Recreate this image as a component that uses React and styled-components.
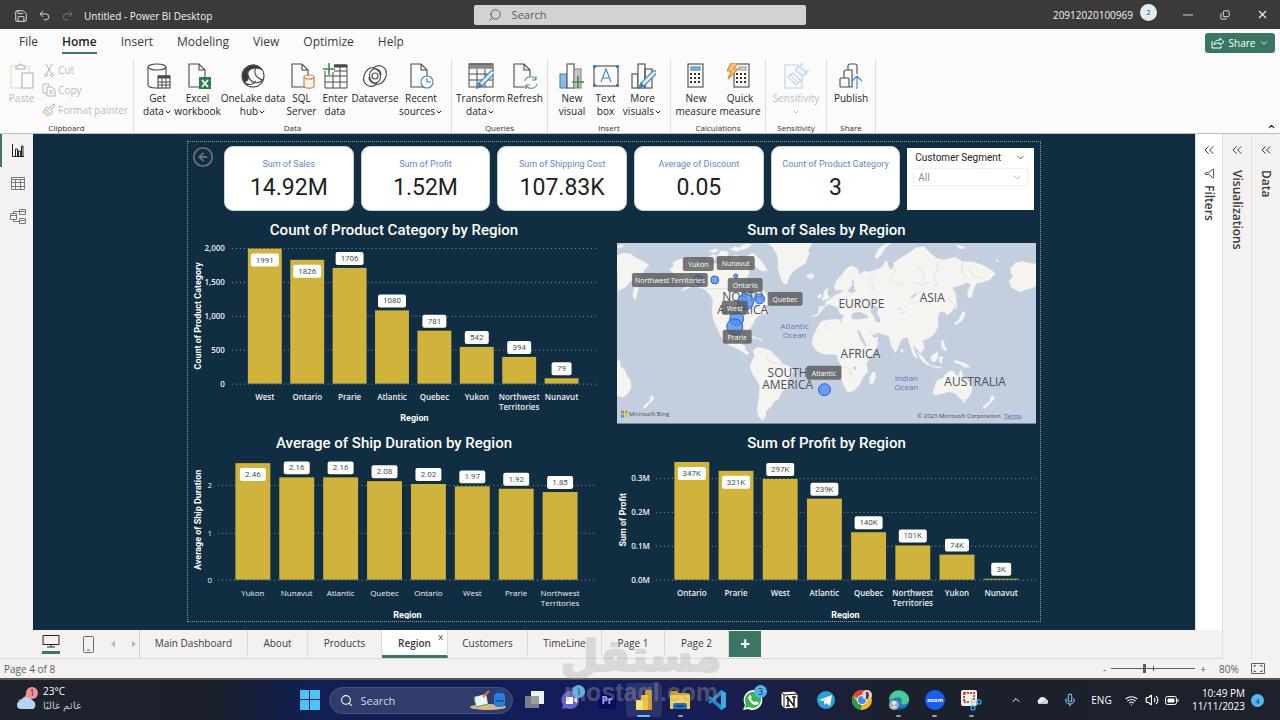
import React from 'react'
import styled, { createGlobalStyle, css } from 'styled-components'
import {
  ChevronDown,
  ChevronUp,
  ChevronsLeft,
  Filter,
  Search,
  X,
  Copy as RestoreIcon,
  Undo2,
  Redo2,
  Save,
  Wifi,
  Volume2,
  Mic,
  CircleArrowLeft,
} from 'lucide-react'

const ui = `'Open Sans', 'Noto Sans', sans-serif`
const din = `Roboto, 'Open Sans', sans-serif`

const GlobalStyle = createGlobalStyle`
  *, *::before, *::after {
    box-sizing: border-box;
  }

  body {
    margin: 0;
    background: #f3f2f1;
    color: #252423;
    font-family: ${ui};
    font-size: 10px;
  }

  button, input, select {
    margin: 0;
    padding: 0;
    border: 0;
    background: none;
    color: inherit;
    font: inherit;
  }

  svg {
    display: block;
    flex: none;
  }
`

const Window = styled.div`
  display: flex;
  flex-direction: column;
  min-height: 100vh;
  position: relative;
  overflow: hidden;
`

/* ---------- title bar ---------- */

const TitleBar = styled.header`
  display: grid;
  grid-template-columns: 1fr 26% 1fr;
  align-items: center;
  height: 29px;
  background: #3b3a39;
  color: #f3f2f1;
`

const TitleLeft = styled.div`
  display: flex;
  align-items: center;
  gap: 10px;
  padding: 2px 0 0 14px;
  white-space: nowrap;

  button:nth-child(3) {
    opacity: 0.4;
  }
`

const SearchBox = styled.label`
  display: flex;
  align-items: center;
  gap: 10px;
  height: 20px;
  padding: 0 14px;
  border-radius: 2px;
  background: #d2d3d0;
  color: #3f5550;

  svg {
    transform: scaleX(-1);
  }

  input {
    flex: 1;
    min-width: 0;
    font-size: 11px;
    outline: none;
  }

  input::placeholder {
    color: #4d6460;
    opacity: 1;
  }
`

const TitleRight = styled.div`
  display: flex;
  align-items: center;
  justify-content: flex-end;
  padding-right: 11px;
`

const Avatar = styled.span`
  width: 17px;
  height: 17px;
  margin: 0 24px 4px 7px;
  border-radius: 50%;
  background: #deecf4;
  color: #27505e;
  font-size: 7px;
  line-height: 17px;
  text-align: center;
`

const WindowButton = styled.button`
  display: flex;
  justify-content: center;
  width: 14px;
  margin-left: ${(p) => (p.$first ? 0 : 23)}px;
`

/* ---------- ribbon ---------- */

const Ribbon = styled.section`
  background: #fbfbfb;
  border-bottom: 1px solid #b8c0c6;
`

const RibbonTabs = styled.nav`
  display: flex;
  align-items: center;
  height: 28px;
  padding: 0 5px 0 7px;
`

const RibbonTab = styled.button`
  padding: 0 12px;
  font-size: 12px;
  line-height: 17px;
  color: #3b3a39;

  span {
    display: block;
    padding: 1px 0 2px;
    border-bottom: 2px solid transparent;
  }

  ${(p) =>
    p.$active &&
    css`
      color: #201f1e;
      font-weight: 600;

      span {
        border-color: #3f7565;
      }
    `}
`

const ShareButton = styled.button`
  display: flex;
  align-items: center;
  justify-content: center;
  gap: 4px;
  width: 70px;
  height: 20px;
  margin-left: auto;
  border-radius: 3px;
  background: #3a7663;
  color: white;
  font-size: 10px;
`

const RibbonBody = styled.div`
  display: flex;
  align-items: stretch;
  padding: 2px 4px 0 0;
`

const Group = styled.div`
  display: flex;
  flex-direction: column;
  width: ${(p) => p.$width}px;
  height: 74px;
  border-right: 1px solid #dfdedd;
`

const GroupItems = styled.div`
  display: flex;
  justify-content: center;
  flex: 1;
  padding-top: 4px;
`

const GroupName = styled.div`
  font-size: 8px;
  line-height: 11px;
  text-align: center;
  color: #323130;
`

const ToolButton = styled.button`
  display: flex;
  flex-direction: column;
  align-items: center;
  width: ${(p) => p.$width}px;
  font-size: 10px;
  line-height: 13px;
  white-space: nowrap;
  color: ${(p) => (p.disabled ? '#bdbbb9' : '#252423')};

  .icon {
    height: 29px;
  }

  .line {
    display: flex;
    align-items: center;
    min-height: 13px;
  }
`

const ClipboardList = styled.div`
  display: flex;
  flex-direction: column;
  margin: -3px 0 0 4px;
`

const ClipboardButton = styled.button`
  display: flex;
  align-items: center;
  gap: 2px;
  height: 20px;
  color: #bdbbb9;
  font-size: 10px;
  line-height: 13px;
  white-space: nowrap;
`

const CollapseButton = styled.button`
  align-self: flex-end;
  margin: 0 0 2px auto;
`

/* ---------- work area ---------- */

const WorkArea = styled.div`
  display: flex;
  flex: 1;
`

const Center = styled.div`
  display: flex;
  flex-direction: column;
  flex: 1;
  min-width: 0;
`

const Stage = styled.div`
  display: flex;
  flex: 1;
`

const Rail = styled.nav`
  display: flex;
  flex-direction: column;
  width: 33px;
  background: #f3f2f1;
`

const RailButton = styled.button`
  display: flex;
  align-items: center;
  justify-content: center;
  height: 33px;
  border-left: 2px solid ${(p) => (p.$active ? '#3a7663' : 'transparent')};
`

const Canvas = styled.main`
  display: flex;
  flex: 1;
  min-width: 0;
  padding: 7px 154px 8px;
  background: #112d42;
`

const Report = styled.div`
  display: flex;
  flex-direction: column;
  flex: 1;
  min-width: 0;
  padding: 4px 4px 0 1px;
  border: 1px dotted #8fa0ab;
`

const CardRow = styled.div`
  display: grid;
  grid-template-columns: 28px repeat(5, minmax(0, 130fr)) minmax(0, 127fr);
  gap: 7px;
  padding-right: 2px;
`

const BackButton = styled.button`
  justify-self: center;
  align-self: start;
  color: #6b6f70;
`

const Card = styled.article`
  display: flex;
  flex-direction: column;
  align-items: center;
  height: 65px;
  padding-top: 12px;
  border: 1px solid #c9d0d6;
  border-radius: 9px;
  background: white;
  font-family: ${din};

  h3 {
    margin: 0;
    color: #6684cf;
    font-size: 9px;
    font-weight: 400;
    line-height: 11px;
    white-space: nowrap;
  }

  p {
    margin: 4px 0 0;
    color: #201f1e;
    font-size: 23px;
    line-height: 28px;
  }
`

const Slicer = styled.label`
  display: block;
  height: 62px;
  margin-top: 2px;
  padding: 1px 8px;
  background: white;
  font-family: ${din};
  font-size: 10px;

  .head {
    display: flex;
    align-items: center;
    justify-content: space-between;
    height: 16px;
    white-space: nowrap;
  }

  .box {
    display: flex;
    align-items: center;
    height: 18px;
    margin: 3px -2px 0;
    padding: 0 4px;
    border: 1px solid #f1f0ee;
    color: #8f8e8b;
  }

  select {
    flex: 1;
    appearance: none;
    outline: none;
  }
`

const Visuals = styled.div`
  display: grid;
  grid-template-columns: minmax(0, 411fr) minmax(0, 420fr);
  column-gap: 18px;
  align-items: start;
  margin-top: 9px;
`

const Visual = styled.section`
  h2 {
    margin: 0;
    padding-bottom: 2px;
    color: white;
    font: 500 15px/21px ${din};
    text-align: center;
    white-space: nowrap;
  }

  & > svg {
    width: 100%;
    height: auto;
  }
`

const ChartSvg = styled.svg`
  .grid {
    stroke: #8696a1;
    stroke-width: 1;
    stroke-dasharray: 1 3;
  }

  .tick,
  .category {
    fill: #eef1f3;
    font-family: ${ui};
    font-size: 8px;
  }

  .strong {
    font-weight: 600;
  }

  .category {
    text-anchor: middle;
  }

  .tick {
    text-anchor: end;
  }

  .title {
    fill: white;
    font: 700 9px ${din};
    text-anchor: middle;
  }

  .value {
    fill: #4a4f55;
    font: 8px ${din};
    text-anchor: middle;
  }
`

const MapSvg = styled.svg`
  font-family: ${ui};

  .land {
    fill: #f6f4f1;
    stroke: #f6f4f1;
    stroke-width: 2;
    stroke-linejoin: round;
  }

  .water {
    fill: #c3cfdf;
    stroke: none;
  }

  .river {
    fill: none;
    stroke: #ccd6e2;
    stroke-width: 2;
  }

  .continent {
    fill: #4c4f57;
    font-size: 12px;
    text-anchor: middle;
  }

  .ocean {
    fill: #6474bd;
    font-size: 8px;
    text-anchor: middle;
  }

  .bubble {
    fill: #4f8df0;
    fill-opacity: 0.8;
    stroke: #2f5fbd;
  }

  .tag {
    fill: #575757;
    fill-opacity: 0.8;
  }

  .tagText {
    fill: white;
    font-size: 7px;
    text-anchor: middle;
  }

  .note {
    fill: #4b4b4b;
    font-size: 6px;
  }
`

const SidePane = styled.aside`
  display: flex;
  flex-direction: column;
  align-items: center;
  gap: ${(p) => (p.$light ? 10 : 12)}px;
  width: ${(p) => (p.$light ? 27 : 29)}px;
  padding-top: 8px;
  border-left: 1px solid #e1dfdd;
  background: ${(p) => (p.$light ? '#ffffff' : '#f3f2f1')};
  color: #3b3a39;
  font-size: 12px;
  font-weight: 600;

  h2 {
    margin: 0;
    font: inherit;
    line-height: 16px;
    writing-mode: vertical-rl;
  }

  .funnel {
    transform: rotate(90deg);
  }
`

const PaneTitle = styled.div`
  display: flex;
  flex-direction: column;
  align-items: center;
  gap: 6px;
`

const PageBar = styled.nav`
  display: flex;
  height: 29px;
  padding-left: 33px;
  border-bottom: 1px solid #dcdad8;
  background: #f3f2f1;
`

const ViewButtons = styled.div`
  display: flex;
  align-items: center;
  gap: 17px;
  width: 107px;
  padding-left: 9px;
  border-right: 1px solid #d2d0ce;

  svg:nth-child(2) {
    margin-left: 6px;
  }
`

const PagerButton = styled.button`
  width: 4px;
`

const PageTab = styled.button`
  position: relative;
  width: ${(p) => p.$width}px;
  border-right: 1px solid #dcdad8;
  border-bottom: 3px solid ${(p) => (p.$active ? '#3a7663' : 'transparent')};
  background: ${(p) => (p.$active ? '#ffffff' : 'transparent')};
  color: #3b3a39;
  font-size: 10px;
  font-weight: ${(p) => (p.$active ? 600 : 400)};
  white-space: nowrap;
`

const CloseMark = styled.span`
  position: absolute;
  top: 1px;
  right: 4px;
  font-size: 9px;
  font-weight: 400;
  line-height: 12px;
`

const AddPage = styled.button`
  width: 32px;
  margin: 1px 0;
  background: #3a7663;
  color: white;
  font-size: 17px;
  font-weight: 700;
  line-height: 20px;
`

const StatusBar = styled.footer`
  display: flex;
  align-items: center;
  height: 21px;
  padding: 0 15px 0 4px;
  border-bottom: 2px solid #55565a;
  background: #f3f2f1;
  color: #605e5c;
`

const Zoom = styled.div`
  display: flex;
  align-items: center;
  gap: 5px;
  margin-left: auto;

  output {
    width: 29px;
    padding-left: 8px;
    margin-right: 6px;
  }

  input {
    width: 84px;
    height: 12px;
    appearance: none;
    background: linear-gradient(#605e5c, #605e5c) center / 100% 1px no-repeat,
      linear-gradient(#605e5c, #605e5c) 50% 50% / 1px 5px no-repeat;
  }

  input::-webkit-slider-thumb {
    appearance: none;
    width: 3px;
    height: 9px;
    background: #605e5c;
  }
`

/* ---------- taskbar ---------- */

const Taskbar = styled.footer`
  display: grid;
  grid-template-columns: 1fr auto 1fr;
  align-items: center;
  height: 40px;
  background: linear-gradient(90deg, #1e222c 0, #1b202d 17%, #111f52 24%, #141c5c 50%, #191f4c 58%, #1b202d 70%, #1c212c 100%);
  color: white;
`

const Weather = styled.div`
  display: flex;
  align-items: center;
  gap: 5px;
  padding: 0 0 4px 16px;
  font-size: 10px;
  line-height: 14px;

  p {
    margin: 0;
  }

  p + p {
    color: #c3c6cc;
  }
`

const Dock = styled.div`
  display: grid;
  grid-template-columns: 38px 184px 473px;
  align-items: center;
  padding-right: 4px;
`

const DockSearch = styled.label`
  display: flex;
  align-items: center;
  gap: 8px;
  height: 27px;
  padding: 0 5px 0 10px;
  border: 1px solid #46517f;
  border-radius: 14px;
  background: #303c6b;

  input {
    flex: 1;
    min-width: 0;
    color: white;
    font-size: 11px;
    outline: none;
  }

  input::placeholder {
    color: #d5d9e6;
    opacity: 1;
  }
`

const DockApps = styled.div`
  display: grid;
  grid-template-columns: repeat(13, 1fr);
  margin-left: 4px;
  width: 473px;
`

const DockButton = styled.button`
  display: flex;
  flex-direction: column;
  align-items: center;
  justify-content: center;
  position: relative;
  height: 34px;
  border-radius: 4px;
  background: ${(p) => (p.$open ? 'rgba(255, 255, 255, 0.1)' : 'transparent')};

  &::after {
    content: '';
    position: absolute;
    bottom: 0;
    width: ${(p) => (p.$open ? 13 : 5)}px;
    height: 2px;
    border-radius: 1px;
    background: ${(p) => (p.$open ? '#6cc0f5' : p.$running ? '#9a9ca6' : 'transparent')};
  }
`

const Badge = styled.span`
  position: absolute;
  top: 2px;
  right: 4px;
  width: 13px;
  height: 13px;
  border-radius: 50%;
  background: #54b4ea;
  color: #10304a;
  font-size: 9px;
  line-height: 13px;
  text-align: center;
`

const Tray = styled.div`
  display: flex;
  align-items: center;
  justify-content: flex-end;
  padding-right: 16px;
  font-size: 10px;
`

const TrayItem = styled.button`
  display: flex;
  justify-content: center;
  width: ${(p) => p.$width || 27}px;
`

const Clock = styled.div`
  width: 63px;
  margin-right: 6px;
  line-height: 13px;
  text-align: right;
`

const Notice = styled.span`
  width: 13px;
  height: 13px;
  border-radius: 50%;
  background: #54b9f0;
  color: #12354a;
  font-size: 8px;
  line-height: 13px;
  text-align: center;
`

const Watermark = styled.svg`
  position: absolute;
  right: 43.75%;
  bottom: 8px;
  overflow: visible;
  pointer-events: none;
  opacity: 0.35;
`

/* ---------- ribbon drawings ---------- */

const Pic = ({ children, faded }) => (
  <svg
    className="icon"
    width="26"
    height="29"
    viewBox="0 0 26 29"
    fill="none"
    stroke="#4b4a48"
    strokeWidth="1.1"
    opacity={faded ? 0.4 : 1}
  >
    {children}
  </svg>
)

const Page = ({ x = 4, y = 1 }) => (
  <path d={`M${x} ${y}h10l6 6v17h-16z M${x + 10} ${y}v6h6`} fill="#fbfbfb" />
)

const Pencil = () => (
  <g stroke="#3f83c4">
    <path d="M9 25l2-5 12-12q2-1 3 .5t-.5 3L14 23z" fill="#d9eaf8" />
    <path d="M9 25l5-2-3-3z" fill="#3f83c4" />
  </g>
)

const Calculator = ({ x }) => (
  <g>
    <rect x={x} y="1" width="15" height="23" fill="#fbfbfb" />
    {[10, 14, 18].map((y) =>
      [3, 7, 11].map((dx) => (
        <rect key={`${y}-${dx}`} x={x + dx - 1} y={y} width="2" height="2" fill="#33322f" stroke="none" />
      ))
    )}
  </g>
)

const pics = {
  getData: (
    <>
      <path d="M3 4v18c0 4 16 4 18 0V4" />
      <ellipse cx="12" cy="4" rx="9" ry="3" />
      <rect x="13" y="13" width="12" height="12" fill="#fff" />
      <path d="M13 14h12" strokeWidth="3" />
      <path d="M13 19h12M13 22h12M17 15v10M21 15v10" strokeWidth="1" />
    </>
  ),
  excel: (
    <>
      <Page x={4} />
      <rect x="14" y="14" width="12" height="12" fill="#2f7d4f" stroke="none" />
      <path d="M17 17l6 7M23 17l-6 7" stroke="#fff" strokeWidth="1.8" />
    </>
  ),
  oneLake: (
    <>
      <circle cx="13" cy="13" r="11" />
      <path d="M13 2C5 3 0 11 4 19c4-1 5-3 4-7s2-7 9-7l4 1q-3-4-8-4z" fill="#383735" />
      <path d="M8 12c2 8 9 10 15 5M4 19c4 4 9 3 12-1M16 5c-3 5 0 10 7 12" />
    </>
  ),
  sql: (
    <>
      <Page x={3} />
      <path d="M15 14v9c0 3 10 3 10 0v-9" stroke="#d0773a" fill="#fff4ea" />
      <ellipse cx="20" cy="14" rx="5" ry="2" stroke="#d0773a" fill="#fff" />
    </>
  ),
  enter: (
    <>
      <path d="M3 8v17h22V2H12M3 13h22M3 19h22M11 9v16M18 2v23M12 8h13" strokeWidth="1" />
      <path d="M12 3h13" strokeWidth="3" />
      <path d="M7 0v12M1 6h12" stroke="#3f8f4c" strokeWidth="1.6" />
    </>
  ),
  dataverse: (
    <>
      <path d="M15 21C7 27 0 20 2 13S9 3 14 6s6 10 2 13-9 0-9-5" />
      <path d="M11 5c8-6 15 1 13 8s-7 10-12 7-6-10-2-13 9 0 9 5" />
      <circle cx="13" cy="13" r="3" />
    </>
  ),
  recent: (
    <>
      <Page x={3} />
      <circle cx="19" cy="19" r="6" fill="#fff" stroke="#3f83c4" />
      <path d="M19 15v4h4" stroke="#3f83c4" />
    </>
  ),
  transform: (
    <>
      <rect x="1" y="1" width="24" height="23" strokeWidth="1" />
      <path d="M1 3h24" strokeWidth="3" stroke="#8a8987" />
      <path d="M1 1h24M1 5h24M1 11h24M1 17h24M9 6v18M17 6v18" strokeWidth="1" />
      <Pencil />
    </>
  ),
  refresh: (
    <>
      <Page x={2} />
      <circle cx="19" cy="20" r="7" fill="#fbfbfb" stroke="none" />
      <path d="M13 18c1-5 9-6 11-1V13M24 17h-4M25 21c-1 5-9 6-11 1v4M14 22h4" stroke="#4e9c57" />
    </>
  ),
  visual: (
    <>
      <rect x="1" y="11" width="7" height="14" fill="#8dbbe6" stroke="#3f83c4" />
      <rect x="8" y="1" width="7" height="24" fill="#fff" />
      <rect x="15" y="6" width="7" height="19" fill="#c6c5c3" stroke="#8b8987" />
      <path d="M19 13v12M13 19h12" stroke="#3f8f4c" strokeWidth="1.7" />
    </>
  ),
  text: (
    <>
      <rect x="1" y="3" width="24" height="20" />
      <path d="M8 19l5-13 5 13M10 15h6" stroke="#3f83c4" />
      <path d="M0 2h3v3H0zM23 2h3v3h-3zM0 21h3v3H0zM23 21h3v3h-3z" fill="#3f83c4" stroke="none" />
    </>
  ),
  more: (
    <>
      <rect x="2" y="11" width="6" height="14" />
      <rect x="8" y="1" width="7" height="24" fill="#fff" />
      <rect x="15" y="6" width="7" height="19" />
      <Pencil />
    </>
  ),
  measure: (
    <>
      <Calculator x={5} />
      <rect x="8" y="4" width="9" height="3" fill="#8dbbe6" stroke="#3f83c4" />
    </>
  ),
  quick: (
    <>
      <Calculator x={7} />
      <rect x="12" y="4" width="7" height="3" fill="#d8d7d5" stroke="#9b9997" />
      <path d="M4 0h7L7 6h4L1 16l3-8H0z" fill="#f6c27c" stroke="#d58a35" />
    </>
  ),
  sensitivity: (
    <g stroke="#5f97c9">
      <path d="M16 2H2v23h17V12" />
      <path d="M5 14l5-4 8 8-5 4zM8 12l7 8" />
      <path d="M12 7l4-4 8 7-4 3zM17 3l3-3M23 9l3-3M19 5l4 5" fill="#dfeaf4" />
    </g>
  ),
  publish: (
    <>
      <rect x="2" y="15" width="9" height="9" rx="1" />
      <path d="M6 15V9q0-2 2-2h6v17h-3M10 7V3q0-2 2-2h5q2 0 2 2v8" />
      <path d="M19 26V14M14 18l5-5 5 5" stroke="#3f83c4" />
    </>
  ),
  paste: (
    <>
      <path d="M7 3H2v22h11M20 9V3h-4" stroke="#e3a04f" />
      <path d="M7 5V3h2q2-4 5 0h2v3H7z" />
      <rect x="13" y="10" width="11" height="15" fill="#fff" />
    </>
  ),
}

const ribbonGroups = [
  {
    name: 'Data',
    width: 318,
    tools: [
      { pic: 'getData', lines: ['Get', 'data'], width: 36, menu: true },
      { pic: 'excel', lines: ['Excel', 'workbook'], width: 44 },
      { pic: 'oneLake', lines: ['OneLake data', 'hub'], width: 67, menu: true },
      { pic: 'sql', lines: ['SQL', 'Server'], width: 30 },
      { pic: 'enter', lines: ['Enter', 'data'], width: 37 },
      { pic: 'dataverse', lines: ['Dataverse'], width: 43 },
      { pic: 'recent', lines: ['Recent', 'sources'], width: 49, menu: true },
    ],
  },
  {
    name: 'Queries',
    width: 96,
    tools: [
      { pic: 'transform', lines: ['Transform', 'data'], width: 51, menu: true },
      { pic: 'refresh', lines: ['Refresh'], width: 38 },
    ],
  },
  {
    name: 'Insert',
    width: 123,
    tools: [
      { pic: 'visual', lines: ['New', 'visual'], width: 34 },
      { pic: 'text', lines: ['Text', 'box'], width: 33 },
      { pic: 'more', lines: ['More', 'visuals'], width: 41, menu: true },
    ],
  },
  {
    name: 'Calculations',
    width: 95,
    tools: [
      { pic: 'measure', lines: ['New', 'measure'], width: 44 },
      { pic: 'quick', lines: ['Quick', 'measure'], width: 44 },
    ],
  },
  {
    name: 'Sensitivity',
    width: 61,
    tools: [{ pic: 'sensitivity', lines: ['Sensitivity', ''], width: 48, menu: true, disabled: true }],
  },
  {
    name: 'Share',
    width: 49,
    tools: [{ pic: 'publish', lines: ['Publish'], width: 40 }],
  },
]

const Tool = ({ pic, lines, width, menu, disabled }) => (
  <ToolButton $width={width} disabled={disabled}>
    <Pic faded={disabled}>{pics[pic]}</Pic>
    {lines.map((line, i) => (
      <span className="line" key={i}>
        {line}
        {menu && i === lines.length - 1 && <ChevronDown size={8} strokeWidth={3} />}
      </span>
    ))}
  </ToolButton>
)

const SmallPic = ({ children }) => (
  <svg width="14" height="14" viewBox="0 0 14 14" fill="none" stroke="#74726f" strokeWidth="1" opacity="0.5">
    {children}
  </svg>
)

/* ---------- charts ---------- */

const charts = {
  count: {
    height: 181,
    title: 'Count of Product Category',
    titleY: 73,
    titleX: 12,
    axisX: 226,
    axisY: 178,
    left: 43,
    right: 410,
    base: 141,
    unit: 0.068,
    first: 76,
    step: 42.5,
    bar: 34,
    tickX: 36,
    ticks: [[0, '0'], [500, '500'], [1000, '1,000'], [1500, '1,500'], [2000, '2,000']],
    strongTicks: true,
    data: [
      ['West', 1991, '1991', 28],
      ['Ontario', 1826, '1826', 28],
      ['Prarie', 1706, '1706', 28],
      ['Atlantic', 1080, '1080', 28],
      ['Quebec', 781, '781', 24],
      ['Yukon', 542, '542', 24],
      ['Northwest Territories', 394, '394', 24],
      ['Nunavut', 79, '79', 20],
    ],
    inside: 2,
    strong: true,
  },
  ship: {
    height: 164,
    title: 'Average of Ship Duration',
    titleY: 64,
    titleX: 12,
    axisX: 219,
    axisY: 162,
    left: 29,
    right: 408,
    base: 124,
    unit: 47.5,
    first: 64,
    step: 44,
    bar: 35,
    tickX: 23,
    ticks: [[0, '0'], [1, '1'], [2, '2']],
    data: [
      ['Yukon', 2.46, '2.46', 26],
      ['Nunavut', 2.16, '2.16', 26],
      ['Atlantic', 2.16, '2.16', 26],
      ['Quebec', 2.08, '2.08', 26],
      ['Ontario', 2.02, '2.02', 26],
      ['West', 1.97, '1.97', 26],
      ['Prarie', 1.92, '1.92', 26],
      ['Northwest Territories', 1.85, '1.85', 26],
    ],
    inside: 1,
  },
  profit: {
    height: 164,
    title: 'Sum of Profit',
    titleY: 64,
    titleX: 9,
    axisX: 229,
    axisY: 162,
    left: 39,
    right: 420,
    base: 124,
    unit: 0.34,
    first: 75,
    step: 44.3,
    bar: 35,
    tickX: 33,
    ticks: [[0, '0.0M'], [100, '0.1M'], [200, '0.2M'], [300, '0.3M']],
    strongTicks: true,
    data: [
      ['Ontario', 347, '347K', 28],
      ['Prarie', 321, '321K', 28],
      ['West', 297, '297K', 28],
      ['Atlantic', 239, '239K', 28],
      ['Quebec', 140, '140K', 28],
      ['Northwest Territories', 101, '101K', 28],
      ['Yukon', 74, '74K', 24],
      ['Nunavut', 3, '3K', 20],
    ],
    inside: 2,
    strong: true,
  },
}

const BarChart = ({ chart, width }) => {
  const { base, unit, first, step, bar } = chart
  return (
    <ChartSvg viewBox={`0 0 ${width} ${chart.height}`} role="img">
      {chart.ticks.map(([value, label]) => {
        const y = Math.round(base - value * unit)
        return (
          <g key={label}>
            <line className="grid" x1={chart.left} x2={chart.right} y1={y + 0.5} y2={y + 0.5} />
            <text className={chart.strongTicks ? 'tick strong' : 'tick'} x={chart.tickX} y={y + 3}>
              {label}
            </text>
          </g>
        )
      })}
      {chart.data.map(([name, value, label, box], i) => {
        const cx = first + i * step
        const top = base - value * unit
        const labelY = i < chart.inside ? top + 11 : top - 10
        return (
          <g key={name}>
            <rect x={cx - bar / 2} y={top} width={bar} height={base - top} fill="#d0b33c" />
            <rect x={cx - box / 2} y={labelY - 6} width={box} height="13" rx="2" fill="#fff" />
            <text className="value" x={cx} y={labelY + 3}>
              {label}
            </text>
            {name.split(' ').map((word, row) => (
              <text
                key={word}
                className={chart.strong ? 'category strong' : 'category'}
                x={cx}
                y={base + 16 + row * 10}
              >
                {word}
              </text>
            ))}
          </g>
        )
      })}
      <text className="title" x={chart.axisX} y={chart.axisY}>
        Region
      </text>
      <text className="title" transform={`translate(${chart.titleX} ${chart.titleY}) rotate(-90)`}>
        {chart.title}
      </text>
    </ChartSvg>
  )
}

const tags = [
  ['Yukon', 66, 14, 31],
  ['Nunavut', 100, 13, 38],
  ['Northwest Territories', 15, 30, 76],
  ['Ontario', 111, 35, 35],
  ['Quebec', 151, 49, 35],
  ['West', 105, 58, 26],
  ['Prarie', 106, 87, 29],
  ['Atlantic', 190, 123, 35],
]

const bubbles = [
  [82, 37, 5],
  [98, 37, 4],
  [119, 33, 2],
  [129, 59, 8],
  [143, 56, 5],
  [120, 76, 7],
  [118, 84, 8],
  [208, 147, 6],
]

const WorldMap = () => (
  <MapSvg viewBox="0 0 420 181" role="img">
    <rect width="420" height="181" fill="#c3cfdf" />
    <g transform="translate(0 -1) scale(0.3333)">
      <g className="land">
        {/* north america */}
        <path d="M158 82l14-10-4-10 18-8 22-8 22 4 20 8 26 6 26 2 30-2 16 8 20-4 14-10 6 8-4 10 12-2 0 22-8 14-14 6-14 8 4 12 18 8 12 12 8 10 4-16 8-16 14 2 12 10 10 12 10 14 6 12-14 4-14 6 12 6 4 8-12 8-16 4-12 14-8 16-10 14 2 26-8-16-14-6-18 2-8 12 2 14 10 8 8-8 10 0-4 14 8 2 2 14 12 8-6 5-16-10-16-10-22-8-10-18-8-22-6-2 10 28-8-8-12-26-14-30-4-28 4-28-10-18-14-16-20-8-18-4-10 6-24 10 12-12-12-6-2-12z" />
        <path d="M270 52l16-14 12 2-6 14zM300 42l14-16 20 4-2 16-18 4zM340 22l16-8 18 6-12 8zM372 12l22-7 10 4-20 12-14 2zM392 42l16-8 20 16 16 22 8 14-16 2-20-14-14-14zM340 46l20-6 16 16-14 8-22-4zM278 28l18-8 10 4-14 8z" />
        {/* greenland, iceland, caribbean */}
        <path d="M452 3l16 12 12 20 6 20-2 20 6 26 10 22 10 3 8-22 12-16 20-14 18-12 2-12 8-14-4-12 8-12 4-9zM570 104l8-8 12 2 2 7-10 7zM396 282l16 2 10 7-8-1zM424 290l12 2-2 4zM470 178l10 4-4 6z" />
        {/* south america */}
        <path d="M410 325l14-8 20 4 20 8 12 14 14 12 6 12 24 8 10 10-4 14-12 16-2 22-18 14-8 20-16 10-6 14-16 12-2 18-8 12-12-14-4-20 6-36 2-34-8-16-12-18-10-22 6-18 8-18z" />
        {/* far east coast at the left edge */}
        <path d="M0 42l16-8 24 2 16 12 26 12 14 10-12 12-8 12-16 4 6 12-6 14 4 18-10 34-6-14 4-26 2-22-14 4-16 18-20 10zM0 360l8-6 2 20 12 10 8 18 10 14 2 24-12 18-12 8-18-4zM104 460l7 10-11 14-3-2zM98 484l-14 16-5-3 13-14zM0 14l12-6 8 4-14 6z" />
        {/* africa */}
        <path d="M616 238l26-4 24-1 8 10 22 8 20 2 10 4 14 24 12 24 20 2 14-5-10 24-18 22-8 20 4 22-14 16-10 22-16 18-20 6-12-22-10-32 6-22-12-20-4-16-18-4-18 2-24-10-14-18 0-18 10-24 10-20zM770 390l6 3 1 14-8 18-9 0 1-18z" />
        {/* europe and asia */}
        <path d="M606 216l2-22 20-2 0-12 14-8 14-12 12-4 10-6 20 0 14-6 4-14-14 2-6 12-12 12-8-12-10-2-8 4-4-12 6-16 14-16 16-22 14-8 18 8 8 18 14-10 10 2 22-4 18-8 8-10 8-12 10 26 8 0 6-20 20-14 24-14 20-16 26-4 16 18 22 18 24 4 30-8 24 14 30 0 30 10 26 14 12 12-16 16-22 8-20 4-8 20-6 20-8 4-4-16 12-26-16-4-22 10-22 4 12 18 2 26-12 28-16 12-6-12-16 2-6 16 2 28-14 24-20 14-14 4 6 22-10 16-14-14-12-18 6 24 10 24-12-8-10-30-8-28-18 8-18 40-12-18-8-32-22-6-22-6 12 16-6 18-30 14-16-16-14-28-6-22-18-2-16-4-6-12 10-12-14-8-6-16-12-6-14-6-14 8-6 10-14 16-20 4zM780 50l-4-6 10-22 18-14 18-5-16 16-14 22zM622 152l6-10 6-2-2 16 8 12-14 6-10 0 6-10zM610 156l6 6-8 8-4-6z" />
        {/* japan, south east asia */}
        <path d="M1035 220l6-12 6 6-4 14-10 12-14 8-4-4 12-8zM976 296l6 2 2 12 8 14-6 4-10-14zM904 332l12 10 14 18 12 10-12-2-16-16zM944 372l20 4 14 3-14-1zM944 344l12-8 8-6 2 14-8 14-10 2zM970 346l12 0-6 8 2 10-8-2zM1014 356l16 4 16 4 16 12-18 0-14-10-12-2zM855 320l5 6-2 6-5-4zM1018 170l4 30-5-2-3-26z" />
        {/* australia, new zealand, alaska at the right edge */}
        <path d="M958 428l6-12 16-6 10-14 14-8 10 2 0 8 14 6 6-20 6 18 14 14 14 20-4 20-12 16-16 2-12-12-6-8-20-4-22 6-18 4-8-6zM1040 476l8 0-4 8zM1128 460l7 10-12 14-3-2zM1122 484l-16 16-5-3 14-14zM1184 78l14-14 20-6 20 6 22 2 0 66-20 8-10 2-16 8-16-8-12-6-6-18 12-16-6-8zM1020 10l16 2 12 6-18 2zM1140 54l8 2-4 4z" />
      </g>
      <g className="water">
        <path d="M704 222l10-10 16-2 22 10 4 8-22 4-26 0zM762 196l14-6 10 10-4 14 8 14 2 14-14-2-4-14-10-14zM698 150l10-20-2-22 6 10 0 24 8 2-10 10zM722 262l8 6 20 42-4 4-16-26zM755 262l14 16 14 2 6-6 0 10-16 4z" />
        <path d="M368 145l6-16 14-6 8 4 8 18 14 4 4 14-12 8-14-10-16-4z" />
        <path d="M710 376l8-2 2 10-8 0zM840 202l16-4-6 6zM882 166l14-10 6-6-2 10-14 10zM626 262l5 0 0-2z" />
      </g>
      <path
        className="river"
        d="M820 110l20 16 14-2 10 12M905 70l14 20 6 18M830 60l6 30-10 14M960 60l6 20-14 24 10 20-10 16M1040 60l-4 30 14 20M995 170l14 12 14 14M770 95l-12 20 14 16-6 16M686 375l16 8 2 26M446 350l20 14 24 4M850 215l20-6M1060 80l10 22 30 8M940 120l-20 10-26-10M270 140l50 0 20 4"
      />
    </g>

    <text className="continent" x="126" y="58">NORTH</text>
    <text className="continent" x="126" y="71">AMERICA</text>
    <text className="continent" x="171" y="134">SOUTH</text>
    <text className="continent" x="171" y="146">AMERICA</text>
    <text className="continent" x="245" y="65">EUROPE</text>
    <text className="continent" x="244" y="115">AFRICA</text>
    <text className="continent" x="316" y="59">ASIA</text>
    <text className="continent" x="359" y="143">AUSTRALIA</text>
    <text className="ocean" x="178" y="86">Atlantic</text>
    <text className="ocean" x="178" y="95">Ocean</text>
    <text className="ocean" x="290" y="138">Indian</text>
    <text className="ocean" x="290" y="147">Ocean</text>

    {bubbles.map(([cx, cy, r]) => (
      <circle className="bubble" key={cx} cx={cx} cy={cy} r={r} />
    ))}
    {tags.map(([name, x, y, w]) => (
      <g key={name}>
        <rect className="tag" x={x} y={y} width={w} height="14" rx="2" />
        <text className="tagText" x={x + w / 2} y={y + 10}>
          {name}
        </text>
      </g>
    ))}

    <path d="M4 168h3v3H4z" fill="#e0705a" />
    <path d="M8 168h3v3H8z" fill="#9dbb4d" />
    <path d="M4 172h3v3H4z" fill="#4b9bd5" />
    <path d="M8 172h3v3H8z" fill="#eebf45" />
    <text className="note" x="12" y="173">Microsoft Bing</text>
    <text className="note" x="301" y="175">© 2023 Microsoft Corporation</text>
    <a href="#terms">
      <text className="note" x="388" y="175" style={{ fill: '#4b62b5' }} textDecoration="underline">Terms</text>
    </a>
  </MapSvg>
)

/* ---------- taskbar drawings ---------- */

const App = ({ children }) => (
  <svg width="22" height="22" viewBox="0 0 22 22" fill="none">
    {children}
  </svg>
)

const apps = [
  {
    name: 'Task view',
    art: (
      <App>
        <path d="M7 2h13v13H7z" fill="#eef0f4" />
        <path d="M1 7h14v12H1z" fill="#8a8f96" fillOpacity="0.85" />
      </App>
    ),
  },
  {
    name: 'Chat',
    badge: 1,
    art: (
      <App>
        <path d="M11 2a9 9 0 1 1-5 17l-4 1 1-4A9 9 0 0 1 11 2z" fill="#6b62c5" />
        <path d="M6 8h7v7H6zM14 10l3-2v6l-3-2z" fill="#fff" />
      </App>
    ),
  },
  {
    name: 'Premiere',
    art: (
      <App>
        <rect x="2" y="2" width="18" height="18" rx="3" fill="#0a0a63" />
        <text x="11" y="15" fill="#aaa6f5" fontSize="10" fontWeight="700" textAnchor="middle">Pr</text>
      </App>
    ),
  },
  {
    name: 'Power BI',
    open: true,
    art: (
      <App>
        <rect x="12" y="1" width="7" height="20" rx="1" fill="#d79a1e" />
        <rect x="8" y="6" width="7" height="15" rx="1" fill="#f0c33c" />
        <rect x="3" y="11" width="7" height="10" rx="1" fill="#f9e07a" />
      </App>
    ),
  },
  {
    name: 'Explorer',
    running: true,
    art: (
      <App>
        <path d="M1 4q0-2 2-2h5l2 2h9q2 0 2 2v4H1z" fill="#d99b20" />
        <rect x="1" y="6" width="20" height="14" rx="1" fill="#f7cf55" />
        <path d="M4 20v-4q0-2 2-2h10q2 0 2 2v4z" fill="#2673b8" />
        <path d="M7 17h8" stroke="#154a80" strokeWidth="2" />
      </App>
    ),
  },
  {
    name: 'VS Code',
    art: (
      <App>
        <path d="M15 1l5 3v14l-5 3L2 9l2-2 11 9V6L4 15l-2-2z" fill="#2489ca" />
        <path d="M15 1l5 3v14l-5 3z" fill="#3ba8ea" />
      </App>
    ),
  },
  {
    name: 'WhatsApp',
    badge: 3,
    art: (
      <App>
        <path d="M11 1a10 10 0 1 1-5 19l-5 1 2-5A10 10 0 0 1 11 1z" fill="#fff" />
        <path d="M11 3a8 8 0 1 1-4 15l-4 1 1-4a8 8 0 0 1 7-12z" fill="#35b54d" />
        <path d="M8 6c-2 1-2 3-1 5 2 3 4 5 7 5 2 0 2-1 3-2l-3-2-1 1c-2 0-4-2-4-4l1-1z" fill="#fff" />
      </App>
    ),
  },
  {
    name: 'Notion',
    art: (
      <App>
        <path d="M3 3l13-1 4 3v14l-14 1-3-4z" fill="#fff" stroke="#1a1a1a" />
        <path d="M3 3l3 3 14-1M6 6v14" stroke="#1a1a1a" />
        <path d="M10 17V9l6 8V8M8 9h3M14 8h4M8 17h4" stroke="#1a1a1a" strokeWidth="1.5" />
      </App>
    ),
  },
  {
    name: 'Telegram',
    art: (
      <App>
        <circle cx="11" cy="11" r="9" fill="#2ba1da" />
        <path d="M4 11l13-5-2 11-4-3-2 2v-4l5-4-6 4z" fill="#fff" />
      </App>
    ),
  },
  {
    name: 'Chrome',
    art: (
      <App>
        <circle cx="11" cy="11" r="10" fill="#e8b92b" />
        <path d="M11 11L2 7a10 10 0 0 1 18-1h-9z" fill="#dd4437" />
        <path d="M11 11l-1 10A10 10 0 0 1 2 7l5 7z" fill="#2d9a4b" />
        <circle cx="11" cy="11" r="5" fill="#fff" />
        <circle cx="11" cy="11" r="4" fill="#4285ec" />
        <circle cx="16" cy="6" r="5" fill="#d8d4cf" />
        <path d="M15 3h2l1 3-1 4h-2z" fill="#4a3c35" />
      </App>
    ),
  },
  {
    name: 'Edge',
    running: true,
    art: (
      <App>
        <circle cx="11" cy="11" r="10" fill="#1c7fc4" />
        <path d="M1 10C2 3 9 0 14 2s8 6 7 10-7 4-8 2c3-4-2-7-6-5s-4 1-6 1z" fill="#4ccb8c" />
        <path d="M8 10c-3 4 1 11 9 8-3 4-10 4-13 0s0-8 4-8z" fill="#11518f" />
        <circle cx="6" cy="16" r="5" fill="#a9abae" />
        <circle cx="6" cy="14" r="2" fill="#e6e6e6" />
        <path d="M3 19q3-4 6 0z" fill="#e6e6e6" />
      </App>
    ),
  },
  {
    name: 'Zoom',
    running: true,
    art: (
      <App>
        <circle cx="11" cy="11" r="10" fill="#1760ee" />
        <text x="11" y="13" fill="#fff" fontSize="6" fontWeight="700" textAnchor="middle">zoom</text>
      </App>
    ),
  },
  {
    name: 'Snipping Tool',
    running: true,
    art: (
      <App>
        <rect x="1" y="1" width="16" height="16" rx="2" fill="#f4f0ee" />
        <path d="M4 4h10v9H4z" stroke="#ce4a35" strokeWidth="2" strokeDasharray="2 1" />
        <path d="M12 9v8M10 13h8" stroke="#c9d5dc" strokeWidth="2" />
        <circle cx="13" cy="19" r="2" stroke="#2a9fd8" strokeWidth="1.4" />
        <circle cx="19" cy="13" r="2" stroke="#2a9fd8" strokeWidth="1.4" />
      </App>
    ),
  },
]

const ribbonTabs = ['File', 'Home', 'Insert', 'Modeling', 'View', 'Optimize', 'Help']

const cards = [
  ['Sum of Sales', '14.92M'],
  ['Sum of Profit', '1.52M'],
  ['Sum of Shipping Cost', '107.83K'],
  ['Average of Discount', '0.05'],
  ['Count of Product Category', '3'],
]

const pages = [
  ['Main Dashboard', 108],
  ['About', 60],
  ['Products', 74],
  ['Region', 66],
  ['Customers', 80],
  ['TimeLine', 74],
  ['Page 1', 63],
  ['Page 2', 64],
]

const PowerBI = () => {
  return (
    <Window>
      <GlobalStyle />
      <TitleBar>
        <TitleLeft>
          <button aria-label="Save"><Save size={14} strokeWidth={1.5} /></button>
          <button aria-label="Undo"><Undo2 size={13} strokeWidth={1.5} /></button>
          <button aria-label="Redo"><Redo2 size={13} strokeWidth={1.5} /></button>
          <span>Untitled - Power BI Desktop</span>
        </TitleLeft>
        <SearchBox>
          <Search size={14} strokeWidth={1.5} />
          <input aria-label="Search" placeholder="Search" />
        </SearchBox>
        <TitleRight>
          <span>20912020100969</span>
          <Avatar>2</Avatar>
          <WindowButton $first aria-label="Minimize">
            <svg width="10" height="2"><path d="M0 1h10" stroke="#d6d5d4" /></svg>
          </WindowButton>
          <WindowButton aria-label="Restore"><RestoreIcon size={10} transform="scale(1 -1)" /></WindowButton>
          <WindowButton aria-label="Close"><X size={13} /></WindowButton>
        </TitleRight>
      </TitleBar>

      <Ribbon>
        <RibbonTabs>
          {ribbonTabs.map((tab) => (
            <RibbonTab key={tab} $active={tab === 'Home'}>
              <span>{tab}</span>
            </RibbonTab>
          ))}
          <ShareButton>
            <svg width="14" height="12" viewBox="0 0 14 12" fill="none" stroke="white">
              <path d="M1 4v7h9V9M3 8c0-4 3-5 6-5V1l4 4-4 3V6C6 6 4 6 3 8z" />
            </svg>
            Share
            <ChevronDown size={10} />
          </ShareButton>
        </RibbonTabs>
        <RibbonBody>
          <Group $width={134}>
            <GroupItems>
              <ToolButton $width={33} disabled>
                <Pic faded>{pics.paste}</Pic>
                <span className="line">Paste</span>
              </ToolButton>
              <ClipboardList>
                <ClipboardButton disabled>
                  <SmallPic>
                    <path d="M4 1l5 9M10 1L5 10" />
                    <circle cx="4" cy="12" r="1.5" stroke="#3f83c4" />
                    <circle cx="10" cy="12" r="1.5" stroke="#3f83c4" />
                  </SmallPic>
                  Cut
                </ClipboardButton>
                <ClipboardButton disabled>
                  <SmallPic>
                    <path d="M5 10H1V1h6v2M5 4h5l3 3v6H5zM7 8h4M7 10h4" />
                  </SmallPic>
                  Copy
                </ClipboardButton>
                <ClipboardButton disabled>
                  <SmallPic>
                    <path d="M8 4l4-3 1 1-3 4zM5 4l6 5-2 2-6-5z" />
                    <path d="M3 6l6 5-4 2-4-4z" fill="#f2c28a" stroke="#d58a35" />
                  </SmallPic>
                  Format painter
                </ClipboardButton>
              </ClipboardList>
            </GroupItems>
            <GroupName>Clipboard</GroupName>
          </Group>
          {ribbonGroups.map((group) => (
            <Group key={group.name} $width={group.width}>
              <GroupItems>
                {group.tools.map((tool) => (
                  <Tool key={tool.pic} {...tool} />
                ))}
              </GroupItems>
              <GroupName>{group.name}</GroupName>
            </Group>
          ))}
          <CollapseButton aria-label="Collapse ribbon"><ChevronUp size={9} strokeWidth={3} /></CollapseButton>
        </RibbonBody>
      </Ribbon>

      <WorkArea>
        <Center>
          <Stage>
            <Rail>
              <RailButton $active aria-label="Report view">
                <svg width="12" height="13" viewBox="0 0 12 13" fill="none" stroke="#252423">
                  <path d="M.5 0v12.500h11.500M3.500 12V5h2v7M6.500 12V7h2v5M9.500 12V2h1.500v10" />
                </svg>
              </RailButton>
              <RailButton aria-label="Table view">
                <svg width="14" height="13" viewBox="0 0 14 13" fill="none" stroke="#7a7876">
                  <path d="M.5.5h13v12H.5zM.5 2.500h13M.5 5.500h13M.5 9.500h13M4.500 3v10M9.500 3v10" />
                </svg>
              </RailButton>
              <RailButton aria-label="Model view">
                <svg width="16" height="15" viewBox="0 0 16 15" fill="none" stroke="#7a7876">
                  <path d="M.5 4.500h6v6h-6zM9.500.5h6v5h-6zM9.500 9.500h6v5h-6zM.5 6.500h6M9.500 2.500h6M9.500 11.500h6M3.500 4V2.500h6M3.500 11v1.500h6" />
                </svg>
              </RailButton>
            </Rail>
            <Canvas>
              <Report>
                <CardRow>
                  <BackButton aria-label="Back"><CircleArrowLeft size={22} strokeWidth={2} /></BackButton>
                  {cards.map(([label, value]) => (
                    <Card key={label}>
                      <h3>{label}</h3>
                      <p>{value}</p>
                    </Card>
                  ))}
                  <Slicer>
                    <span className="head">
                      Customer Segment
                      <ChevronDown size={11} strokeWidth={1.5} />
                    </span>
                    <span className="box">
                      <select aria-label="Customer Segment" defaultValue="All">
                        <option>All</option>
                      </select>
                      <ChevronDown size={11} strokeWidth={1.5} />
                    </span>
                  </Slicer>
                </CardRow>
                <Visuals>
                  <Visual>
                    <h2>Count of Product Category by Region</h2>
                    <BarChart chart={charts.count} width={411} />
                  </Visual>
                  <Visual>
                    <h2>Sum of Sales by Region</h2>
                    <WorldMap />
                  </Visual>
                </Visuals>
                <Visuals>
                  <Visual>
                    <h2>Average of Ship Duration by Region</h2>
                    <BarChart chart={charts.ship} width={411} />
                  </Visual>
                  <Visual>
                    <h2>Sum of Profit by Region</h2>
                    <BarChart chart={charts.profit} width={420} />
                  </Visual>
                </Visuals>
              </Report>
            </Canvas>
            <SidePane $light>
              <ChevronsLeft size={16} strokeWidth={1.5} />
              <PaneTitle>
                <Filter className="funnel" size={11} strokeWidth={2} />
                <h2>Filters</h2>
              </PaneTitle>
            </SidePane>
          </Stage>
          <PageBar>
            <ViewButtons>
              <svg width="18" height="20" viewBox="0 0 18 20" fill="none" stroke="#252423">
                <path d="M1 1.500h16v9H1zM9 10v3M5 13h8" />
                <path d="M0 18.500h18" stroke="#3a7663" strokeWidth="3" />
              </svg>
              <svg width="11" height="17" viewBox="0 0 11 17" fill="none" stroke="#6b6967">
                <rect x="0.500" y="0.500" width="10" height="16" rx="1" />
                <path d="M4 14h3" />
              </svg>
              <PagerButton aria-label="Previous page">
                <svg width="4" height="6"><path d="M4 0v6L0 3z" fill="#b5b3b1" /></svg>
              </PagerButton>
              <PagerButton aria-label="Next page">
                <svg width="4" height="6"><path d="M0 0v6l4-3z" fill="#b5b3b1" /></svg>
              </PagerButton>
            </ViewButtons>
            {pages.map(([name, width]) => (
              <PageTab key={name} $width={width} $active={name === 'Region'}>
                {name}
                {name === 'Region' && <CloseMark>x</CloseMark>}
              </PageTab>
            ))}
            <AddPage aria-label="New page">+</AddPage>
          </PageBar>
        </Center>
        <SidePane>
          <ChevronsLeft size={16} strokeWidth={1.5} />
          <h2>Visualizations</h2>
        </SidePane>
        <SidePane>
          <ChevronsLeft size={16} strokeWidth={1.5} />
          <h2>Data</h2>
        </SidePane>
      </WorkArea>

      <StatusBar>
        <span>Page 4 of 8</span>
        <Zoom>
          <span>-</span>
          <input type="range" aria-label="Zoom" min="10" max="190" defaultValue="80" />
          <span>+</span>
          <output>80%</output>
          <svg width="14" height="11" viewBox="0 0 14 11" fill="none" stroke="#605e5c">
            <path d="M.5.5h13v10H.5z" />
            <path d="M3 4V2.500h2M9 2.500h2V4M3 7v1.500h2M9 8.500h2V7" />
          </svg>
        </Zoom>
      </StatusBar>

      <Taskbar>
        <Weather>
          <svg width="22" height="24" viewBox="0 0 22 24">
            <path d="M10 5q1 8-8 9 4 6 11 1z" fill="#e5a536" />
            <path d="M5 23a4 4 0 0 1 0-8 6 6 0 0 1 11-1 5 5 0 0 1 1 9z" fill="#b9d2f4" />
            <circle cx="16" cy="7" r="6" fill="#f2919a" />
            <text x="16" y="10" fill="#4a1d24" fontSize="9" textAnchor="middle">1</text>
          </svg>
          <div>
            <p>23°C</p>
            <p dir="rtl">غائم غالبًا</p>
          </div>
        </Weather>
        <Dock>
          <DockButton aria-label="Start">
            <svg width="20" height="20" viewBox="0 0 20 20" fill="#4cc2f7">
              <path d="M0 0h9v9H0zM10 0h10v9H10zM0 10h9v10H0zM10 10h10v10H10z" />
            </svg>
          </DockButton>
          <DockSearch>
            <Search size={13} strokeWidth={2} />
            <input aria-label="Search the computer" placeholder="Search" />
            <svg width="38" height="22" viewBox="0 0 38 22" fill="none">
              <ellipse cx="19" cy="18" rx="18" ry="3" fill="#d9b98a" />
              <path d="M5 8l12-3 2 10-12 3z" fill="#eef2ef" />
              <path d="M5 8l2 10 12-3" stroke="#53a06b" />
              <path d="M14 8l6-6" stroke="#e07548" strokeWidth="2" />
              <rect x="25" y="4" width="11" height="14" rx="4" fill="#2a7de0" />
              <path d="M28 4V2h5v2M26 12h9" stroke="#174f9c" strokeWidth="1.500" />
            </svg>
          </DockSearch>
          <DockApps>
            {apps.map((app) => (
              <DockButton key={app.name} aria-label={app.name} $open={app.open} $running={app.running}>
                {app.art}
                {app.badge && <Badge>{app.badge}</Badge>}
              </DockButton>
            ))}
          </DockApps>
        </Dock>
        <Tray>
          <TrayItem aria-label="Hidden icons"><ChevronUp size={12} /></TrayItem>
          <TrayItem aria-label="OneDrive">
            <svg width="14" height="9" viewBox="0 0 14 9">
              <path d="M3 8a3 3 0 0 1 0-5 4 4 0 0 1 7 0 3 3 0 0 1 1 5z" fill="#f0f0f2" />
              <path d="M2 8l8-5 1 5z" fill="#c7c8cc" />
            </svg>
          </TrayItem>
          <TrayItem aria-label="Microphone"><Mic size={14} color="#7cc5e8" /></TrayItem>
          <TrayItem $width={37}>ENG</TrayItem>
          <TrayItem $width={22} aria-label="Network"><Wifi size={13} /></TrayItem>
          <TrayItem $width={20} aria-label="Volume"><Volume2 size={14} /></TrayItem>
          <TrayItem $width={20} aria-label="Battery">
            <svg width="14" height="10" viewBox="0 0 14 10" fill="none" stroke="white">
              <rect x="0.500" y="1.500" width="11" height="8" rx="2" />
              <path d="M3 4h6v3H3z" fill="white" />
              <path d="M13 4v3" />
            </svg>
          </TrayItem>
          <Clock>
            <div>10:49 PM</div>
            <div>11/11/2023</div>
          </Clock>
          <Notice>4</Notice>
        </Tray>
      </Taskbar>

      <Watermark width="158" height="80" viewBox="0 0 158 80" fill="#a9a9ae">
        <text
          x="79"
          y="39"
          textAnchor="middle"
          fontFamily="'DejaVu Sans', sans-serif"
          fontSize="44"
          fontWeight="700"
          stroke="#a9a9ae"
          strokeWidth="2"
          strokeLinejoin="round"
        >
          مستقل
        </text>
        <text x="79" y="69" textAnchor="middle" fontFamily="'Liberation Sans', sans-serif" fontSize="25" fontWeight="700">
          mostaql.com
        </text>
      </Watermark>
    </Window>
  )
}

export default PowerBI
